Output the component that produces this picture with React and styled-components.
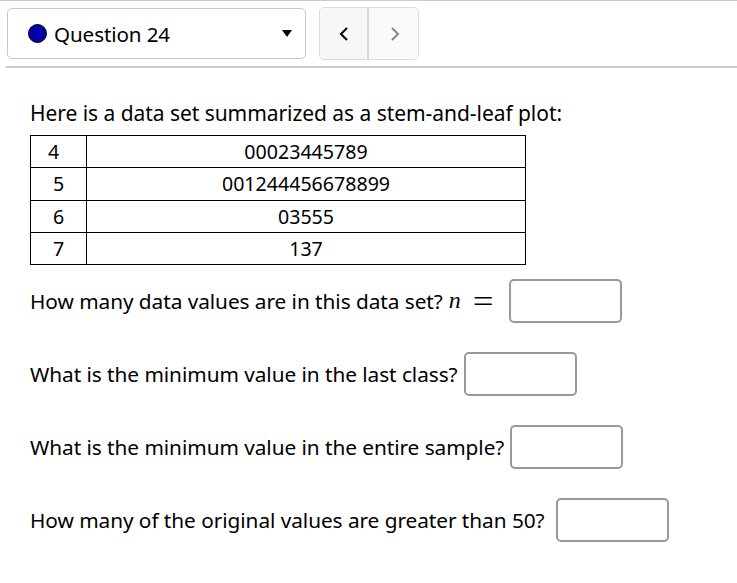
import React from "react"
import styled, {createGlobalStyle} from "styled-components"

const stems = [
    {stem: "4", leaves: "00023445789", shift: true},
    {stem: "5", leaves: "001244456678899"},
    {stem: "6", leaves: "03555"},
    {stem: "7", leaves: "137"},
]

const questions = [
    {text: "How many data values are in this data set?", math: true},
    {text: "What is the minimum value in the last class?"},
    {text: "What is the minimum value in the entire sample?"},
    {text: "How many of the original values are greater than 50?", extra: true},
]

function Chevron({dir}) {
    return (
        <svg width="10" height="14" viewBox="0 0 10 14" fill="none" stroke="currentColor" strokeWidth="2">
            {dir === "left" ? <path d="M8 1 L2 7 L8 13" /> : <path d="M2 1 L8 7 L2 13" />}
        </svg>
    )
}

function App() {
    return (
        <>
            <GlobalStyle />
            <Page>
                <Header>
                    <Select>
                        <Dot />
                        <SelectLabel>Question 24</SelectLabel>
                        <Caret />
                    </Select>
                    <NavGroup>
                        <NavButton $active><Chevron dir="left" /></NavButton>
                        <NavButton><Chevron dir="right" /></NavButton>
                    </NavGroup>
                </Header>

                <Content>
                    <Intro>Here is a data set summarized as a stem-and-leaf plot:</Intro>
                    <Plot>
                        <tbody>
                            {stems.map((row) => (
                                <tr key={row.stem}>
                                    <StemCell $shift={row.shift}>{row.stem}</StemCell>
                                    <LeafCell>{row.leaves}</LeafCell>
                                </tr>
                            ))}
                        </tbody>
                    </Plot>

                    {questions.map((q, i) => (
                        <Question key={i} $gap={q.extra ? 11 : 6}>
                            <span>{q.text}</span>
                            {q.math && (
                                <MathVar>
                                    <i>n</i>
                                    <Equals>=</Equals>
                                </MathVar>
                            )}
                            <AnswerInput type="text" />
                        </Question>
                    ))}
                </Content>
            </Page>
        </>
    )
}

const GlobalStyle = createGlobalStyle`
    body {
        margin: 0;
        background: #fff;
        font-family: "Noto Sans", "DejaVu Sans", sans-serif;
        color: #000;
    }
`

const Page = styled.div`
    border-top: 1px solid #ccc;
`

const Header = styled.div`
    display: flex;
    align-items: center;
    gap: 13px;
    margin-left: 6px;
    padding: 6px 0 6px 1px;
    border-bottom: 2px solid #ccc;
`

const Select = styled.div`
    box-sizing: border-box;
    width: 299px;
    height: 51px;
    display: flex;
    align-items: center;
    padding: 0 13px 0 20px;
    border: 1px solid #c8c8c8;
    border-radius: 5px;
`

const Dot = styled.span`
    box-sizing: border-box;
    width: 19px;
    height: 19px;
    border-radius: 50%;
    background: #0000a8;
    border: 1.5px solid #000;
    margin-right: 7px;
`

const SelectLabel = styled.span`
    flex: 1;
    font-size: 20.6px;
    letter-spacing: -0.1px;
`

const Caret = styled.span`
    width: 0;
    height: 0;
    border-left: 5.5px solid transparent;
    border-right: 5.5px solid transparent;
    border-top: 7px solid #000;
`

const NavGroup = styled.div`
    display: flex;
    height: 51px;
    border: 1px solid #dcdcdc;
    border-radius: 5px;
    overflow: hidden;
`

const NavButton = styled.div`
    box-sizing: border-box;
    width: 49px;
    display: flex;
    align-items: center;
    justify-content: center;
    background: ${(p) => (p.$active ? "#f7f7f7" : "#fafafa")};
    color: ${(p) => (p.$active ? "#000" : "#888")};
    border-right: ${(p) => (p.$active ? "2px solid #d8d8d8" : "none")};
    padding-left: ${(p) => (p.$active ? "0" : "2px")};
`

const Content = styled.div`
    padding: 32px 0 0 30px;
`

const Intro = styled.p`
    margin: 0 0 9px;
    font-size: 21px;
    line-height: 26px;
    letter-spacing: -0.05px;
`

const Plot = styled.table`
    border-collapse: collapse;
    width: 496px;
    font-size: 19.6px;
    margin-bottom: 13px;

    td {
        border: 1px solid #000;
        height: 31.25px;
        padding: 0;
    }
`

const StemCell = styled.td`
    width: ${(p) => (p.$shift ? "45px" : "55px")};
    text-align: center;
    padding-right: ${(p) => (p.$shift ? "10px" : "0")} !important;
`

const LeafCell = styled.td`
    text-align: center;
`

const Question = styled.div`
    display: flex;
    align-items: center;
    gap: ${(p) => p.$gap}px;
    height: 45px;
    margin-bottom: 28px;
    font-size: 20.8px;
    letter-spacing: -0.05px;
`

const MathVar = styled.span`
    font-family: "Liberation Serif", serif;
    font-size: 24px;
    display: inline-flex;
    align-items: center;
    gap: 13px;
    margin-right: 11px;
`

const Equals = styled.span`
    font-style: normal;
    font-size: 32px;
    line-height: 1;
    transform: scaleX(1.15);
`

const AnswerInput = styled.input`
    box-sizing: border-box;
    width: 113px;
    height: 44px;
    border: 2px solid #999;
    border-radius: 5px;
    outline: none;
`

export default App
